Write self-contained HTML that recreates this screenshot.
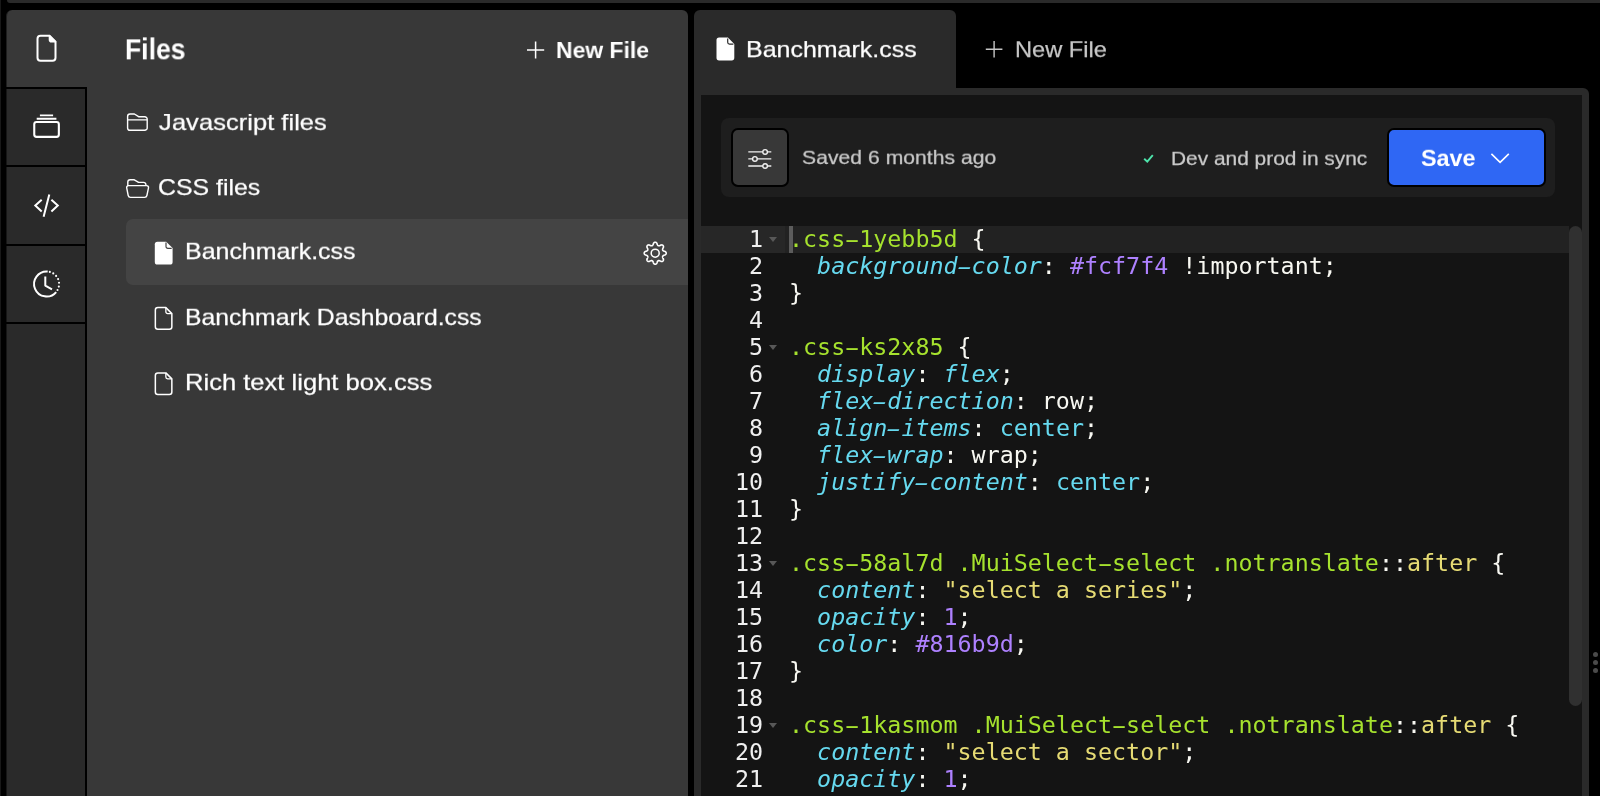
<!DOCTYPE html>
<html lang="en">
<head>
<meta charset="utf-8">
<title>Files - Banchmark.css</title>
<style>
*{box-sizing:border-box;margin:0;padding:0}
html,body{width:1600px;height:796px;overflow:hidden;background:#000}
body{position:relative;font-family:"Liberation Sans",sans-serif;color:#fff}
.abs{position:absolute}
svg{position:absolute;left:0;top:0;overflow:visible}
.t{position:absolute;white-space:nowrap;line-height:1;will-change:transform;transform-origin:0 84.65%}

/* chrome strips */
#topband{left:7px;top:0;width:1593px;height:3px;background:#2a2a2a;border-bottom-left-radius:5px}
#leftstrip{left:0;top:0;width:1px;height:796px;background:#181818}

/* files panel (includes active icon cell) */
#files{left:6px;top:10px;width:682px;border-left:1px solid #1e1e1e;height:786px;background:#383838;border-radius:6px 6px 0 0}
/* icon column */
#col{left:6px;top:87px;width:81px;height:709px;background:#000}
.cell{position:absolute;left:0;width:79px;border-left:1px solid #161616;background:#2a2a2a}

/* file rows */
#sel{left:126px;top:219px;width:562px;height:66px;background:#444;border-radius:7px 0 0 7px}
.f22{font-size:22.2px}

/* editor */
#tab{left:694px;top:10px;width:262px;height:82px;background:#2a2a2a;border-radius:6px 6px 0 0}
#edwrap{left:694px;top:88px;width:895px;height:720px;background:#2a2a2a;border-radius:0 6px 0 0}
#ed{left:701px;top:95px;width:881px;height:701px;background:#141414}
#toolbar{left:721px;top:118px;width:834px;height:79px;background:#1e1e1e;border-radius:8px}
#optbtn{left:731px;top:128px;width:58px;height:59px;background:#383838;border:2px solid #000;border-radius:7px}
#savebtn{left:1387px;top:128px;width:159px;height:59px;background:#2f67f4;border:2px solid #000;border-radius:7px}

/* code */
#actg{left:701px;top:226px;width:84px;height:27px;background:#272727}
#actl{left:785px;top:226px;width:784px;height:27px;background:#222}
#cursor{left:789px;top:226px;width:3.5px;height:27px;background:#5c5c5c}
#thumb{left:1569px;top:226px;width:13px;height:480px;background:#303030;border-radius:6.5px}
#code,#gut{position:absolute;top:226px;font-family:"DejaVu Sans Mono","Liberation Mono",monospace;font-size:23.33px;line-height:27px;white-space:pre;color:#f8f8f2;will-change:transform}
#code{left:789.4px}
#gut{left:701px;width:62px;text-align:right;color:#f0f0f0}
#code i{color:#66d9ef;font-style:italic}
.h{display:inline-block;font-weight:inherit;transform:scaleX(1.9)}
.g{color:#a6e22e}.c{color:#66d9ef}.p{color:#ae81ff}.s{color:#e6db74}
.fold{position:absolute;left:769.2px;width:0;height:0;border-left:4.7px solid transparent;border-right:4.7px solid transparent;border-top:5.6px solid #585858}
.dot{position:absolute;left:1592.5px;width:5px;height:5px;border-radius:50%;background:#4a4a4a}
</style>
</head>
<body>
<div id="topband" class="abs"></div>
<div id="leftstrip" class="abs"></div>

<div id="files" class="abs"></div>
<div id="col" class="abs">
  <div class="cell" style="top:2px;height:76.3px"></div>
  <div class="cell" style="top:80.3px;height:76.4px"></div>
  <div class="cell" style="top:158.7px;height:76.3px"></div>
  <div class="cell" style="top:237px;height:472px"></div>
</div>
<div id="sel" class="abs"></div>

<div id="tab" class="abs"></div>
<div id="edwrap" class="abs"></div>
<div id="ed" class="abs"></div>
<div id="toolbar" class="abs"></div>
<div id="optbtn" class="abs"></div>
<div id="savebtn" class="abs"></div>

<div id="actg" class="abs"></div>
<div id="actl" class="abs"></div>
<div id="cursor" class="abs"></div>
<div id="thumb" class="abs"></div>

<!--ICONS-->
<svg width="1600" height="796" viewBox="0 0 1600 796">
<path d="M40.50 35.70 H49.50 L55.50 41.70 V57.80 a3 3 0 0 1 -3 3 H40.50 a3 3 0 0 1 -3 -3 V38.70 a3 3 0 0 1 3 -3 Z" stroke="#fff" fill="none" stroke-width="2" stroke-linejoin="round"/>
<path d="M49.50 35.70 V39.70 a2 2 0 0 0 2 2 H55.50 Z" stroke="#fff" fill="#fff" stroke-width="1.6" stroke-linejoin="round"/>
<path d="M39.9 115.4 H53.1 M36.7 118.8 H56.4" stroke="#fff" fill="none" stroke-width="1.9"/>
<rect x="34.25" y="121.95" width="24.6" height="14.9" rx="2.3" stroke="#fff" fill="none" stroke-width="2.1"/>
<path d="M41.7 199.7 L35.3 205.6 L41.7 211.5 M51.4 199.7 L57.8 205.6 L51.4 211.5 M49.3 194.4 L43.6 216.8" stroke="#fff" fill="none" stroke-width="2"/>
<path d="M47.69 271.55 A12.5 12.5 0 1 0 56.18 292.03" stroke="#fff" fill="none" stroke-width="2"/>
<circle cx="49.81" cy="271.92" r="1.05" fill="#fff"/>
<circle cx="53.26" cy="273.42" r="1.05" fill="#fff"/>
<circle cx="56.11" cy="275.88" r="1.05" fill="#fff"/>
<circle cx="58.11" cy="279.12" r="1.05" fill="#fff"/>
<circle cx="59.04" cy="282.80" r="1.05" fill="#fff"/>
<circle cx="58.83" cy="286.60" r="1.05" fill="#fff"/>
<circle cx="57.53" cy="290.06" r="1.05" fill="#fff"/>
<path d="M45.3 276.6 V285.6 L52 289.4" stroke="#fff" fill="none" stroke-width="2" stroke-linejoin="round"/>
<path d="M127.6 116.4 a2.4 2.4 0 0 1 2.4 -2.4 h4.4 l4.2 2.7 h6.2 a2.4 2.4 0 0 1 2.4 2.4 v8.8 a2.4 2.4 0 0 1 -2.4 2.4 h-14.8 a2.4 2.4 0 0 1 -2.4 -2.4 Z M127.6 119.9 H147.2" stroke="#fff" fill="none" stroke-width="1.4" stroke-linejoin="round"/>
<path d="M127.8 185.6 V182.1 a2.3 2.3 0 0 1 2.3 -2.3 h4.2 l4.3 2.6 h5.0 a2.3 2.3 0 0 1 2.3 2.3 v0.9 M128.7 185.6 h17.9 a1.9 1.9 0 0 1 1.9 2.3 l-1.6 7.6 a2.4 2.4 0 0 1 -2.3 1.9 h-14.1 a2.4 2.4 0 0 1 -2.3 -1.9 l-1.5 -7.6 a1.9 1.9 0 0 1 2.0 -2.3 Z" stroke="#fff" fill="none" stroke-width="1.4" stroke-linejoin="round"/>
<path d="M157.40 241.70 H166.20 L172.60 248.10 V262.00 a2.6 2.6 0 0 1 -2.6 2.6 H157.40 a2.6 2.6 0 0 1 -2.6 -2.6 V244.30 a2.6 2.6 0 0 1 2.6 -2.6 Z" fill="#fff"/><path d="M166.00 242.60 V246.50 a1.8 1.8 0 0 0 1.8 1.8 H171.70" fill="none" stroke="#444" stroke-width="1.2"/>
<path d="M719.10 37.50 H727.90 L734.30 43.90 V57.80 a2.6 2.6 0 0 1 -2.6 2.6 H719.10 a2.6 2.6 0 0 1 -2.6 -2.6 V40.10 a2.6 2.6 0 0 1 2.6 -2.6 Z" fill="#fff"/><path d="M727.70 38.40 V42.30 a1.8 1.8 0 0 0 1.8 1.8 H733.40" fill="none" stroke="#2a2a2a" stroke-width="1.2"/>
<path d="M157.85 307.60 H165.85 L171.85 313.60 V326.70 a2.5 2.5 0 0 1 -2.5 2.5 H157.85 a2.5 2.5 0 0 1 -2.5 -2.5 V310.10 a2.5 2.5 0 0 1 2.5 -2.5 Z" stroke="#fff" fill="none" stroke-width="1.5" stroke-linejoin="round"/>
<path d="M165.85 307.60 V311.80 a1.8 1.8 0 0 0 1.8 1.8 H171.85" stroke="#fff" fill="none" stroke-width="1.3" stroke-linejoin="round"/>
<path d="M157.85 372.90 H165.85 L171.85 378.90 V392.00 a2.5 2.5 0 0 1 -2.5 2.5 H157.85 a2.5 2.5 0 0 1 -2.5 -2.5 V375.40 a2.5 2.5 0 0 1 2.5 -2.5 Z" stroke="#fff" fill="none" stroke-width="1.5" stroke-linejoin="round"/>
<path d="M165.85 372.90 V377.10 a1.8 1.8 0 0 0 1.8 1.8 H171.85" stroke="#fff" fill="none" stroke-width="1.3" stroke-linejoin="round"/>
<path d="M666.20 253.20 L666.18 253.47 L666.11 253.74 L665.99 254.00 L665.84 254.25 L665.63 254.49 L665.38 254.71 L665.06 254.91 L664.57 255.06 L664.07 255.19 L663.75 255.34 L663.48 255.49 L663.25 255.64 L663.06 255.80 L662.90 255.96 L662.78 256.12 L662.68 256.30 L662.62 256.49 L662.59 256.70 L662.59 256.92 L662.62 257.17 L662.67 257.43 L662.76 257.73 L662.88 258.06 L663.14 258.51 L663.39 258.96 L663.47 259.33 L663.49 259.67 L663.46 259.98 L663.40 260.27 L663.29 260.53 L663.15 260.77 L662.98 260.98 L662.77 261.15 L662.53 261.29 L662.27 261.40 L661.98 261.46 L661.67 261.49 L661.33 261.47 L660.96 261.39 L660.51 261.14 L660.06 260.88 L659.73 260.76 L659.43 260.67 L659.17 260.62 L658.92 260.59 L658.70 260.59 L658.49 260.62 L658.30 260.68 L658.12 260.78 L657.96 260.90 L657.80 261.06 L657.64 261.25 L657.49 261.48 L657.34 261.75 L657.19 262.07 L657.06 262.57 L656.91 263.06 L656.71 263.38 L656.49 263.63 L656.25 263.84 L656.00 263.99 L655.74 264.11 L655.47 264.18 L655.20 264.20 L654.93 264.18 L654.66 264.11 L654.40 263.99 L654.15 263.84 L653.91 263.63 L653.69 263.38 L653.49 263.06 L653.34 262.57 L653.21 262.07 L653.06 261.75 L652.91 261.48 L652.76 261.25 L652.60 261.06 L652.44 260.90 L652.28 260.78 L652.10 260.68 L651.91 260.62 L651.70 260.59 L651.48 260.59 L651.23 260.62 L650.97 260.67 L650.67 260.76 L650.34 260.88 L649.89 261.14 L649.44 261.39 L649.07 261.47 L648.73 261.49 L648.42 261.46 L648.13 261.40 L647.87 261.29 L647.63 261.15 L647.42 260.98 L647.25 260.77 L647.11 260.53 L647.00 260.27 L646.94 259.98 L646.91 259.67 L646.93 259.33 L647.01 258.96 L647.26 258.51 L647.52 258.06 L647.64 257.73 L647.73 257.43 L647.78 257.17 L647.81 256.92 L647.81 256.70 L647.78 256.49 L647.72 256.30 L647.62 256.12 L647.50 255.96 L647.34 255.80 L647.15 255.64 L646.92 255.49 L646.65 255.34 L646.33 255.19 L645.83 255.06 L645.34 254.91 L645.02 254.71 L644.77 254.49 L644.56 254.25 L644.41 254.00 L644.29 253.74 L644.22 253.47 L644.20 253.20 L644.22 252.93 L644.29 252.66 L644.41 252.40 L644.56 252.15 L644.77 251.91 L645.02 251.69 L645.34 251.49 L645.83 251.34 L646.33 251.21 L646.65 251.06 L646.92 250.91 L647.15 250.76 L647.34 250.60 L647.50 250.44 L647.62 250.28 L647.72 250.10 L647.78 249.91 L647.81 249.70 L647.81 249.48 L647.78 249.23 L647.73 248.97 L647.64 248.67 L647.52 248.34 L647.26 247.89 L647.01 247.44 L646.93 247.07 L646.91 246.73 L646.94 246.42 L647.00 246.13 L647.11 245.87 L647.25 245.63 L647.42 245.42 L647.63 245.25 L647.87 245.11 L648.13 245.00 L648.42 244.94 L648.73 244.91 L649.07 244.93 L649.44 245.01 L649.89 245.26 L650.34 245.52 L650.67 245.64 L650.97 245.73 L651.23 245.78 L651.48 245.81 L651.70 245.81 L651.91 245.78 L652.10 245.72 L652.28 245.62 L652.44 245.50 L652.60 245.34 L652.76 245.15 L652.91 244.92 L653.06 244.65 L653.21 244.33 L653.34 243.83 L653.49 243.34 L653.69 243.02 L653.91 242.77 L654.15 242.56 L654.40 242.41 L654.66 242.29 L654.93 242.22 L655.20 242.20 L655.47 242.22 L655.74 242.29 L656.00 242.41 L656.25 242.56 L656.49 242.77 L656.71 243.02 L656.91 243.34 L657.06 243.83 L657.19 244.33 L657.34 244.65 L657.49 244.92 L657.64 245.15 L657.80 245.34 L657.96 245.50 L658.12 245.62 L658.30 245.72 L658.49 245.78 L658.70 245.81 L658.92 245.81 L659.17 245.78 L659.43 245.73 L659.73 245.64 L660.06 245.52 L660.51 245.26 L660.96 245.01 L661.33 244.93 L661.67 244.91 L661.98 244.94 L662.27 245.00 L662.53 245.11 L662.77 245.25 L662.98 245.42 L663.15 245.63 L663.29 245.87 L663.40 246.13 L663.46 246.42 L663.49 246.73 L663.47 247.07 L663.39 247.44 L663.14 247.89 L662.88 248.34 L662.76 248.67 L662.67 248.97 L662.62 249.23 L662.59 249.48 L662.59 249.70 L662.62 249.91 L662.68 250.10 L662.78 250.28 L662.90 250.44 L663.06 250.60 L663.25 250.76 L663.48 250.91 L663.75 251.06 L664.07 251.21 L664.57 251.34 L665.06 251.49 L665.38 251.69 L665.63 251.91 L665.84 252.15 L665.99 252.40 L666.11 252.66 L666.18 252.93 Z" stroke="#fff" fill="none" stroke-width="1.6" stroke-linejoin="round"/>
<circle cx="655.2" cy="253.2" r="4" stroke="#fff" fill="none" stroke-width="1.5"/>
<path d="M527 50 H544.2 M535.6 41.4 V58.6" stroke="#fff" fill="none" stroke-width="1.5"/>
<path d="M985.8 49.2 H1002.4 M994.1 40.9 V57.5" stroke="#c6c6c6" fill="none" stroke-width="1.4"/>
<path d="M748.3 151.9 H771.3 M748.3 158.9 H771.3 M748.3 166 H771.3" stroke="#f0f0f0" fill="none" stroke-width="1.4"/>
<circle cx="765.1" cy="151.9" r="2.3" fill="#383838" stroke="#f0f0f0" stroke-width="1.4"/>
<circle cx="754.9" cy="158.9" r="2.3" fill="#383838" stroke="#f0f0f0" stroke-width="1.4"/>
<circle cx="765.1" cy="166" r="2.3" fill="#383838" stroke="#f0f0f0" stroke-width="1.4"/>
<path d="M1144.2 158.7 L1147.3 161.7 L1152.8 155.1" stroke="#4ee3ab" fill="none" stroke-width="1.9"/>
<path d="M1491.4 153.9 L1500.1 162.4 L1508.8 153.9" stroke="#fff" fill="none" stroke-width="1.6"/>
</svg>
<!--/ICONS-->
<!--TEXT-->
<div class="t" id="tFiles" style="left:125.10px;top:35.50px;font-size:28.0px;font-weight:700;transform:scale(0.9473,1.0263);color:#fff">Files</div>
<div class="t" id="tNew1" style="left:555.80px;top:39.49px;font-size:23.4px;font-weight:700;transform:scale(0.9789,0.9471);color:#fff">New File</div>
<div class="t" id="tJs" style="left:158.60px;top:110.99px;font-size:23.4px;font-weight:400;transform:scale(1.0937,0.9471);-webkit-text-stroke:0.25px #fff;color:#fff">Javascript files</div>
<div class="t" id="tCss" style="left:158.10px;top:176.49px;font-size:23.4px;font-weight:400;transform:scale(1.0633,0.9471);-webkit-text-stroke:0.25px #fff;color:#fff">CSS files</div>
<div class="t" id="tR1" style="left:184.80px;top:239.99px;font-size:23.4px;font-weight:400;transform:scale(1.0663,0.9588);-webkit-text-stroke:0.25px #fff;color:#fff">Banchmark.css</div>
<div class="t" id="tR2" style="left:184.80px;top:305.59px;font-size:23.4px;font-weight:400;transform:scale(1.0564,0.9588);-webkit-text-stroke:0.25px #fff;color:#fff">Banchmark Dashboard.css</div>
<div class="t" id="tR3" style="left:184.70px;top:371.19px;font-size:23.4px;font-weight:400;transform:scale(1.0931,0.9588);-webkit-text-stroke:0.25px #fff;color:#fff">Rich text light box.css</div>
<div class="t" id="tTab" style="left:746.00px;top:38.29px;font-size:23.4px;font-weight:400;transform:scale(1.0676,0.9412);-webkit-text-stroke:0.25px #fff;color:#fff">Banchmark.css</div>
<div class="t" id="tNew2" style="left:1015.10px;top:37.89px;font-size:23.4px;font-weight:400;transform:scale(1.0108,0.9294);-webkit-text-stroke:0.25px #c6c6c6;color:#c6c6c6">New File</div>
<div class="t" id="tSaved" style="left:801.90px;top:148.28px;font-size:19.4px;font-weight:400;transform:scale(1.0919,0.9500);-webkit-text-stroke:0.25px #cacaca;color:#cacaca">Saved 6 months ago</div>
<div class="t" id="tDev" style="left:1170.60px;top:148.58px;font-size:19.4px;font-weight:400;transform:scale(1.0775,0.9500);-webkit-text-stroke:0.25px #cacaca;color:#cacaca">Dev and prod in sync</div>
<div class="t" id="tSave" style="left:1421.20px;top:147.39px;font-size:23.4px;font-weight:700;transform:scale(1.0000,0.9588);color:#fff">Save</div>
<!--/TEXT-->
<div id="gut">1
2
3
4
5
6
7
8
9
10
11
12
13
14
15
16
17
18
19
20
21</div>
<div id="code"><span class="g">.css<b class="h">-</b>1yebb5d</span> {
  <i>background<b class="h">-</b>color</i>: <span class="p">#fcf7f4</span> !important;
}

<span class="g">.css<b class="h">-</b>ks2x85</span> {
  <i>display</i>: <i>flex</i>;
  <i>flex<b class="h">-</b>direction</i>: row;
  <i>align<b class="h">-</b>items</i>: <span class="c">center</span>;
  <i>flex<b class="h">-</b>wrap</i>: wrap;
  <i>justify<b class="h">-</b>content</i>: <span class="c">center</span>;
}

<span class="g">.css<b class="h">-</b>58al7d .MuiSelect<b class="h">-</b>select .notranslate</span>::<span class="s">after</span> {
  <i>content</i>: <span class="s">"select a series"</span>;
  <i>opacity</i>: <span class="p">1</span>;
  <i>color</i>: <span class="p">#816b9d</span>;
}

<span class="g">.css<b class="h">-</b>1kasmom .MuiSelect<b class="h">-</b>select .notranslate</span>::<span class="s">after</span> {
  <i>content</i>: <span class="s">"select a sector"</span>;
  <i>opacity</i>: <span class="p">1</span>;</div>
<div class="fold" style="top:237.4px"></div>
<div class="fold" style="top:345.4px"></div>
<div class="fold" style="top:561.4px"></div>
<div class="fold" style="top:723.4px"></div>

<div class="dot" style="top:651.6px"></div>
<div class="dot" style="top:659.8px"></div>
<div class="dot" style="top:668.1px"></div>
</body>
</html>
